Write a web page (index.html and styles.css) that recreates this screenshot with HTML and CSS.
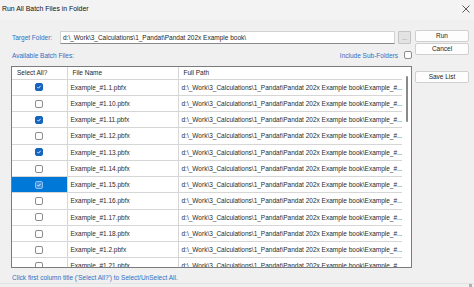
FILE: index.html
```html
<!DOCTYPE html>
<html>
<head>
<meta charset="utf-8">
<link rel="stylesheet" href="styles.css">
</head>
<body>
<div class="window">
  <div class="titlebar">
    <span class="title">Run All Batch Files in Folder</span>
    <svg class="close" width="8" height="8" viewBox="0 0 8 8"><path d="M0.5 0.5 L7.5 7.5 M7.5 0.5 L0.5 7.5" stroke="#333" stroke-width="0.8" fill="none"/></svg>
  </div>
  <div class="content">
    <div class="main">
      <div class="folder-row">
        <span class="blue label">Target Folder:</span>
        <div class="textbox">d:\_Work\3_Calculations\1_Pandat\Pandat 202x Example book\</div>
        <div class="browse">...</div>
      </div>
      <div class="options-row">
        <span class="blue">Available Batch Files:</span>
        <span class="sub"><span class="blue">Include Sub-Folders</span><span class="cb"></span></span>
      </div>
      <div class="grid">
        <div class="tablewrap">
          <table>
            <colgroup><col class="c1"><col class="c2"><col class="c3"></colgroup>
            <thead>
              <tr><th>Select All?</th><th>File Name</th><th>Full Path</th></tr>
            </thead>
            <tbody>
              <tr><td class="chk"><span class="cb on"><svg viewBox="0 0 8 8"><path d="M1.8 4.1 L3.3 5.6 L6.2 2.4" /></svg></span></td><td>Example_#1.1.pbfx</td><td>d:\_Work\3_Calculations\1_Pandat\Pandat 202x Example book\Example_#...</td></tr>
              <tr><td class="chk"><span class="cb"></span></td><td>Example_#1.10.pbfx</td><td>d:\_Work\3_Calculations\1_Pandat\Pandat 202x Example book\Example_#...</td></tr>
              <tr><td class="chk"><span class="cb on"><svg viewBox="0 0 8 8"><path d="M1.8 4.1 L3.3 5.6 L6.2 2.4" /></svg></span></td><td>Example_#1.11.pbfx</td><td>d:\_Work\3_Calculations\1_Pandat\Pandat 202x Example book\Example_#...</td></tr>
              <tr><td class="chk"><span class="cb"></span></td><td>Example_#1.12.pbfx</td><td>d:\_Work\3_Calculations\1_Pandat\Pandat 202x Example book\Example_#...</td></tr>
              <tr><td class="chk"><span class="cb on"><svg viewBox="0 0 8 8"><path d="M1.8 4.1 L3.3 5.6 L6.2 2.4" /></svg></span></td><td>Example_#1.13.pbfx</td><td>d:\_Work\3_Calculations\1_Pandat\Pandat 202x Example book\Example_#...</td></tr>
              <tr><td class="chk"><span class="cb"></span></td><td>Example_#1.14.pbfx</td><td>d:\_Work\3_Calculations\1_Pandat\Pandat 202x Example book\Example_#...</td></tr>
              <tr><td class="chk sel"><span class="cb on"><svg viewBox="0 0 8 8"><path d="M1.8 4.1 L3.3 5.6 L6.2 2.4" /></svg></span></td><td>Example_#1.15.pbfx</td><td>d:\_Work\3_Calculations\1_Pandat\Pandat 202x Example book\Example_#...</td></tr>
              <tr><td class="chk"><span class="cb"></span></td><td>Example_#1.16.pbfx</td><td>d:\_Work\3_Calculations\1_Pandat\Pandat 202x Example book\Example_#...</td></tr>
              <tr><td class="chk"><span class="cb"></span></td><td>Example_#1.17.pbfx</td><td>d:\_Work\3_Calculations\1_Pandat\Pandat 202x Example book\Example_#...</td></tr>
              <tr><td class="chk"><span class="cb"></span></td><td>Example_#1.18.pbfx</td><td>d:\_Work\3_Calculations\1_Pandat\Pandat 202x Example book\Example_#...</td></tr>
              <tr><td class="chk"><span class="cb"></span></td><td>Example_#1.2.pbfx</td><td>d:\_Work\3_Calculations\1_Pandat\Pandat 202x Example book\Example_#...</td></tr>
              <tr><td class="chk"><span class="cb"></span></td><td>Example_#1.21.pbfx</td><td>d:\_Work\3_Calculations\1_Pandat\Pandat 202x Example book\Example_#...</td></tr>
            </tbody>
          </table>
        </div>
        <div class="vscroll"><div class="thumb"></div></div>
      </div>
      <div class="hint blue">Click first column title ('Select All?') to Select/UnSelect All.</div>
    </div>
    <div class="side">
      <div class="btn">Run</div>
      <div class="btn cancel">Cancel</div>
      <div class="btn save">Save List</div>
    </div>
  </div>
  <div class="statusbar"><span class="grip"></span></div>
</div>
</body>
</html>
```
FILE: styles.css
```css
* { box-sizing: border-box; }
body {
  margin: 0;
  font-family: "Liberation Sans", Arial, sans-serif;
  font-size: 6.5px;
  color: #1e1e1e;
}
.window {
  width: 474px;
  height: 287px;
  background: #f0f0f0;
  display: flex;
  flex-direction: column;
  overflow: hidden;
}
.titlebar {
  height: 20px;
  flex: none;
  background: #f3f3f3;
  display: flex;
  align-items: center;
  justify-content: space-between;
  padding: 0 4px 3px 2px;
  font-size: 6.9px;
  color: #111;
}
.close { display: block; }
.content {
  flex: 1;
  display: flex;
  padding: 10px 0 0 11px;
  gap: 3px;
}
.main {
  width: 401px;
  display: flex;
  flex-direction: column;
}
.blue { color: #2f6fc4; }
.folder-row {
  display: flex;
  align-items: center;
  height: 14px;
}
.label {
  width: 49px;
  padding-left: 1px;
}
.textbox {
  width: 335px;
  height: 13px;
  background: #fff;
  border: 1px solid #d2d2d2;
  border-bottom-color: #8a8a8a;
  border-radius: 1px;
  padding: 0 2px;
  line-height: 11px;
  white-space: nowrap;
  overflow: hidden;
}
.browse {
  margin-left: 3px;
  width: 13px;
  height: 13px;
  background: #e3e3e3;
  border: 1px solid #c4c4c4;
  border-radius: 1px;
  text-align: center;
  line-height: 13px;
  color: #666;
  font-size: 6px;
}
.options-row {
  display: flex;
  justify-content: space-between;
  align-items: center;
  height: 16px;
  margin-top: 3px;
  padding-left: 1px;
}
.sub {
  display: flex;
  align-items: center;
  gap: 6px;
}
.cb {
  display: inline-block;
  width: 8px;
  height: 8px;
  border: 1px solid #8c8c8c;
  border-radius: 2px;
  background: #fff;
  vertical-align: middle;
}
.cb svg { display: block; width: 6px; height: 6px; }
.cb svg path { stroke: #fff; stroke-width: 1.2; fill: none; }
.cb.on {
  background: #1664c0;
  border-color: #1664c0;
}
.grid {
  margin-top: 3px;
  height: 202px;
  border: 1px solid #7b7b7b;
  background: #fff;
  display: flex;
  overflow: hidden;
}
.tablewrap {
  width: 390px;
  overflow: hidden;
}
table {
  border-collapse: collapse;
  table-layout: fixed;
  width: 390px;
}
col.c1 { width: 55px; }
col.c2 { width: 111px; }
col.c3 { width: 224px; }
th, td {
  border-right: 1px solid #d6d6d6;
  border-bottom: 1px solid #d6d6d6;
  white-space: nowrap;
  overflow: hidden;
  text-align: left;
  font-weight: normal;
  vertical-align: middle;
}
th {
  height: 12px;
  padding: 0 4px 0 5px;
  color: #1e1e1e;
}
td {
  height: 16.25px;
  padding: 0 2px 0 3px;
  color: #2a2a2a;
}
td.chk {
  text-align: center;
  padding: 0;
}
td.sel { background: #0078d7; }
td.sel .cb.on {
  background: #3d8fe0;
  border-color: #8cc0f0;
}
.vscroll {
  flex: 1;
  display: flex;
  justify-content: center;
  padding-top: 9px;
}
.thumb {
  width: 2px;
  height: 46px;
  border-radius: 1px;
  background: #8a8a8a;
}
.hint {
  margin-top: 6px;
  padding-left: 1px;
}
.side {
  width: 54px;
  display: flex;
  flex-direction: column;
}
.btn {
  height: 12px;
  background: #fdfdfd;
  border: 1px solid #d0d0d0;
  border-radius: 2px;
  text-align: center;
  line-height: 10px;
  color: #1e1e1e;
}
.cancel { margin-top: 1px; }
.save { margin-top: 16px; }
.statusbar {
  height: 4px;
  flex: none;
  border-top: 1px solid #e2e2e2;
  background: #f0f0f0;
  display: flex;
  justify-content: flex-end;
}
.grip {
  width: 3px;
  height: 3px;
  background: #b0b0b0;
  margin-right: 2px;
}
```
